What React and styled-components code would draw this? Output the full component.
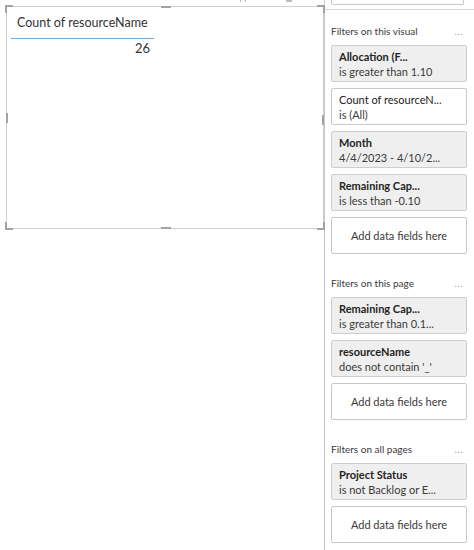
import React from 'react';
import styled, {createGlobalStyle} from 'styled-components';

const GlobalStyle = createGlobalStyle`
  html, body {
    margin: 0;
    padding: 0;
    background: #fff;
  }
  body {
    font-family: "Segoe UI", Lato, "Open Sans", sans-serif;
    color: #252423;
  }
`;

const Page = styled.div`
  display: flex;
  width: 474px;
  height: 550px;
  overflow: hidden;
`;

const Canvas = styled.div`
  width: 324px;
  flex-shrink: 0;
  padding-left: 6px;
  box-sizing: border-box;
`;

const HeaderStrip = styled.div`
  height: 6px;
  display: flex;
  align-items: flex-start;
  padding-left: 234px;
  gap: 40px;
`;

const Stub = styled.span`
  display: block;
  width: ${props => props.w}px;
  height: 2px;
  border-left: ${props => props.split ? '1px solid #b8b8b8' : 'none'};
  border-right: ${props => props.split ? '1px solid #b8b8b8' : 'none'};
  background: ${props => props.split ? 'transparent' : '#bcbcbc'};
`;

const Visual = styled.div`
  position: relative;
  width: 318px;
  height: 223px;
  border: 1px solid #cfcfcf;
  box-sizing: border-box;
`;

const Handle = styled.span`
  position: absolute;
  background: #a3a3a3;
  width: ${props => props.vertical ? 2 : 10}px;
  height: ${props => props.vertical ? 10 : 2}px;
`;

const Corner = styled.span`
  position: absolute;
  width: 6px;
  height: 6px;
  border-color: #a3a3a3;
  border-style: solid;
  border-width: 0;
  ${props => props.top ? 'top: -2px; border-top-width: 2px;' : 'bottom: -2px; border-bottom-width: 2px;'}
  ${props => props.left ? 'left: -2px; border-left-width: 2px;' : 'right: -2px; border-right-width: 2px;'}
`;

const Table = styled.div`
  width: 143px;
  margin: 1px 0 0 4px;
`;

const HeaderCell = styled.div`
  height: 30px;
  line-height: 30px;
  padding-left: 6px;
  font-size: 12.5px;
  color: #333;
  border-bottom: 1px solid #6fa8dc;
`;

const ValueCell = styled.div`
  height: 18px;
  line-height: 18px;
  padding-right: 4px;
  text-align: right;
  font-size: 13px;
  color: #333;
`;

const Pane = styled.div`
  flex: 1;
  border-left: 1px solid #c8c8c8;
  display: flex;
  flex-direction: column;
`;

const SearchStub = styled.div`
  height: 4px;
  margin: 0 10px 0 6px;
  border: 1px solid #c8c8c8;
  border-top: none;
  border-radius: 0 0 2px 2px;
`;

const Divider = styled.div`
  height: 1px;
  margin-top: 4px;
  background: #d4d4d4;
`;

const Section = styled.div`
  padding: 0 7px 0 6px;
  margin-top: ${props => props.first ? 14 : 22}px;
`;

const SectionTitle = styled.div`
  display: flex;
  justify-content: space-between;
  height: 14px;
  line-height: 14px;
  font-size: 10px;
  color: #3b3a39;
  padding-right: 4px;
  margin-bottom: 7px;
`;

const Dots = styled.span`
  color: #a19f9d;
  font-size: 10px;
  letter-spacing: 0.5px;
`;

const CardList = styled.div`
  display: flex;
  flex-direction: column;
  gap: 6px;
`;

const Card = styled.div`
  height: 37px;
  box-sizing: border-box;
  padding: 3px 7px;
  border: 1px solid ${props => props.applied ? '#cdcdcd' : '#c8c8c8'};
  border-radius: 2px;
  background: ${props => props.applied ? '#efefef' : '#fff'};
  font-size: 11px;
  line-height: 15px;
  white-space: nowrap;
  overflow: hidden;
`;

const CardTitle = styled.div`
  font-weight: ${props => props.bold ? 700 : 400};
  color: #252423;
`;

const CardText = styled.div`
  color: #3b3a39;
`;

const DropZone = styled.div`
  height: 37px;
  box-sizing: border-box;
  border: 1px solid #c8c8c8;
  border-radius: 2px;
  display: flex;
  align-items: center;
  justify-content: center;
  font-size: 11px;
  color: #3b3a39;
`;

const sections = [
  {
    title: 'Filters on this visual',
    filters: [
      {name: 'Allocation (F...', text: 'is greater than 1.10', applied: true},
      {name: 'Count of resourceN...', text: 'is (All)', applied: false},
      {name: 'Month', text: '4/4/2023 - 4/10/2...', applied: true},
      {name: 'Remaining Cap...', text: 'is less than -0.10', applied: true},
    ],
  },
  {
    title: 'Filters on this page',
    filters: [
      {name: 'Remaining Cap...', text: 'is greater than 0.1...', applied: true},
      {name: 'resourceName', text: "does not contain '_'", applied: true},
    ],
  },
  {
    title: 'Filters on all pages',
    filters: [
      {name: 'Project Status', text: 'is not Backlog or E...', applied: true},
    ],
  },
];

const App = () => {
  return (
    <Page>
      <GlobalStyle/>
      <Canvas>
        <HeaderStrip>
          <Stub w={4} split/>
          <Stub w={6}/>
        </HeaderStrip>
        <Visual>
          <Corner top left/>
          <Corner top/>
          <Corner left/>
          <Corner/>
          <Handle style={{top: -1, left: 154}}/>
          <Handle style={{bottom: -1, left: 154}}/>
          <Handle vertical style={{left: -1, top: 106}}/>
          <Handle vertical style={{right: -1, top: 108}}/>
          <Table>
            <HeaderCell>Count of resourceName</HeaderCell>
            <ValueCell>26</ValueCell>
          </Table>
        </Visual>
      </Canvas>
      <Pane>
        <SearchStub/>
        <Divider/>
        {sections.map((section, i) => (
          <Section key={section.title} first={i === 0}>
            <SectionTitle>
              <span>{section.title}</span>
              <Dots>...</Dots>
            </SectionTitle>
            <CardList>
              {section.filters.map(f => (
                <Card key={f.name} applied={f.applied}>
                  <CardTitle bold={f.applied}>{f.name}</CardTitle>
                  <CardText>{f.text}</CardText>
                </Card>
              ))}
              <DropZone>Add data fields here</DropZone>
            </CardList>
          </Section>
        ))}
      </Pane>
    </Page>
  );
};

export default App;
